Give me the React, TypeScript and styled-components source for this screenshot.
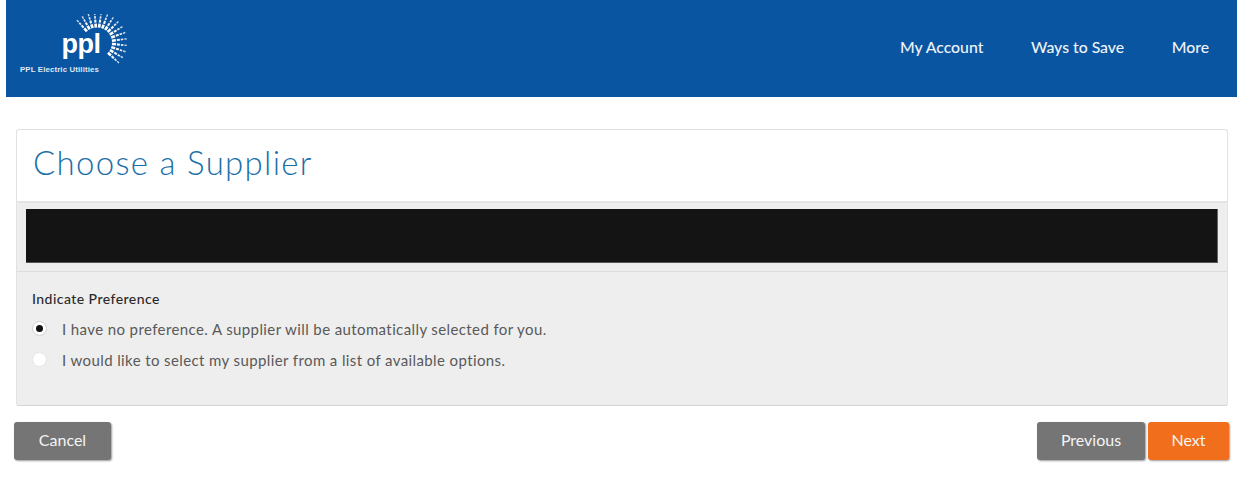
import React from 'react';
import styled, { createGlobalStyle } from 'styled-components';

const GlobalStyle = createGlobalStyle`
  html, body {
    margin: 0;
    padding: 0;
    background: #ffffff;
    font-family: 'Lato', 'Liberation Sans', sans-serif;
  }
`;

const Page = styled.div`
  width: 1245px;
  height: 489px;
  overflow: hidden;
  box-sizing: border-box;
`;

const Header = styled.header`
  display: flex;
  align-items: center;
  justify-content: space-between;
  margin: 0 8px 0 6px;
  height: 97px;
  background: #0a55a1;
  box-sizing: border-box;
  padding: 0 28px 0 13px;
`;

const Nav = styled.nav`
  display: flex;
  gap: 47.5px;
  padding-bottom: 5px;
`;

const NavLink = styled.a`
  color: #eef3f9;
  font-size: 15.8px;
  font-weight: 500;
  font-family: 'Lato', 'Liberation Sans', sans-serif;
`;

const Card = styled.section`
  margin: 32px 17px 0 16px;
  height: 277px;
  box-sizing: border-box;
  border: 1px solid #e2e2e2;
  border-bottom-color: #d4d4d4;
  border-radius: 3px;
  background: #eeeeee;
  display: flex;
  flex-direction: column;
`;

const CardTitleBar = styled.div`
  height: 73px;
  flex: none;
  box-sizing: border-box;
  background: #ffffff;
  border-bottom: 2px solid #e4e4e4;
  padding: 11px 0 0 16px;
  border-radius: 3px 3px 0 0;
`;

const Title = styled.h1`
  margin: 0;
  font-family: 'Lato', 'Liberation Sans', sans-serif;
  font-weight: 300;
  font-size: 33px;
  line-height: 42px;
  letter-spacing: 1.3px;
  color: #1b6fa8;
`;

const RedactedRow = styled.div`
  flex: none;
  height: 69px;
  box-sizing: border-box;
  padding: 6px 9px 0;
  border-bottom: 1px solid #dcdcdc;
`;

const RedactedBar = styled.div`
  height: 54px;
  box-sizing: border-box;
  background: #141414;
  border-bottom: 1px solid #555555;
  border-right: 1px solid #666666;
`;

const Preferences = styled.div`
  padding: 18px 15px 0;
  display: flex;
  flex-direction: column;
`;

const GroupLabel = styled.div`
  font-family: 'Lato', 'Liberation Sans', sans-serif;
  font-size: 14px;
  line-height: 17px;
  font-weight: 500;
  letter-spacing: 0.45px;
  color: #2a2a2a;
  margin-bottom: 6px;
`;

const Option = styled.label`
  display: flex;
  align-items: center;
  gap: 15px;
  height: 31px;
  font-family: 'Lato', 'Liberation Sans', sans-serif;
  font-size: 15px;
  letter-spacing: 0.39px;
  color: #595959;
`;

const Radio = styled.span<{ $checked?: boolean }>`
  flex: none;
  width: 15px;
  height: 15px;
  box-sizing: border-box;
  border-radius: 50%;
  background: #ffffff;
  border: 1px solid ${(p) => (p.$checked ? '#d2d2d2' : '#e6e6e6')};
  display: flex;
  align-items: center;
  justify-content: center;

  &::after {
    content: '';
    display: ${(p) => (p.$checked ? 'block' : 'none')};
    width: 7px;
    height: 7px;
    border-radius: 50%;
    background: #111111;
  }
`;

const Actions = styled.div`
  display: flex;
  justify-content: space-between;
  margin: 16px 16px 0 14px;
`;

const ButtonGroup = styled.div`
  display: flex;
  gap: 3px;
`;

const Button = styled.button<{ $primary?: boolean; $width: number }>`
  width: ${(p) => p.$width}px;
  height: 38px;
  border: 0;
  border-radius: 3px;
  padding: 0 0 3px;
  background: ${(p) => (p.$primary ? '#f06e1c' : '#757575')};
  color: #f4f4f4;
  font-family: 'Lato', 'Liberation Sans', sans-serif;
  font-size: 16px;
  box-shadow: 1px 1px 2px rgba(0, 0, 0, 0.4);
`;

// sunburst around the ppl letters, each ray is a few dashes getting thinner outward
const RAY_SEGMENTS = [
  { from: 15, to: 19, width: 2.6, opacity: 1 },
  { from: 20, to: 23, width: 2.1, opacity: 0.95 },
  { from: 24, to: 26.5, width: 1.7, opacity: 0.9 },
  { from: 27.5, to: 30, width: 1.4, opacity: 0.8 },
];

const RAY_ANGLES = Array.from({ length: 15 }, (_, i) => ((-132 + i * 12.5) * Math.PI) / 180);

const Logo = () => (
  <svg width="110" height="70" viewBox="0 0 110 70" aria-label="PPL Electric Utilities">
    {RAY_ANGLES.map((a, i) =>
      RAY_SEGMENTS.map((s, j) => (
        <line
          key={`${i}-${j}`}
          x1={78 + s.from * Math.cos(a)}
          y1={28.5 + s.from * Math.sin(a)}
          x2={78 + s.to * Math.cos(a)}
          y2={28.5 + s.to * Math.sin(a)}
          stroke="#ffffff"
          strokeWidth={s.width}
          opacity={s.opacity}
        />
      )),
    )}
    <text x="42.5" y="38.5" fill="#ffffff" fontFamily="Liberation Sans, sans-serif" fontWeight="700" fontSize="27" letterSpacing="-0.5">
      ppl
    </text>
    <text x="1" y="58" fill="#dfe9f4" fontFamily="Liberation Sans, sans-serif" fontWeight="700" fontSize="7.8" letterSpacing="0.15">
      PPL Electric Utilities
    </text>
  </svg>
);

export default function App() {
  return (
    <Page>
      <GlobalStyle />
      <Header>
        <Logo />
        <Nav>
          <NavLink>My Account</NavLink>
          <NavLink>Ways to Save</NavLink>
          <NavLink>More</NavLink>
        </Nav>
      </Header>
      <Card>
        <CardTitleBar>
          <Title>Choose a Supplier</Title>
        </CardTitleBar>
        <RedactedRow>
          <RedactedBar />
        </RedactedRow>
        <Preferences>
          <GroupLabel>Indicate Preference</GroupLabel>
          <Option>
            <Radio $checked />
            I have no preference. A supplier will be automatically selected for you.
          </Option>
          <Option>
            <Radio />
            I would like to select my supplier from a list of available options.
          </Option>
        </Preferences>
      </Card>
      <Actions>
        <Button $width={97}>Cancel</Button>
        <ButtonGroup>
          <Button $width={108}>Previous</Button>
          <Button $primary $width={81}>Next</Button>
        </ButtonGroup>
      </Actions>
    </Page>
  );
}
